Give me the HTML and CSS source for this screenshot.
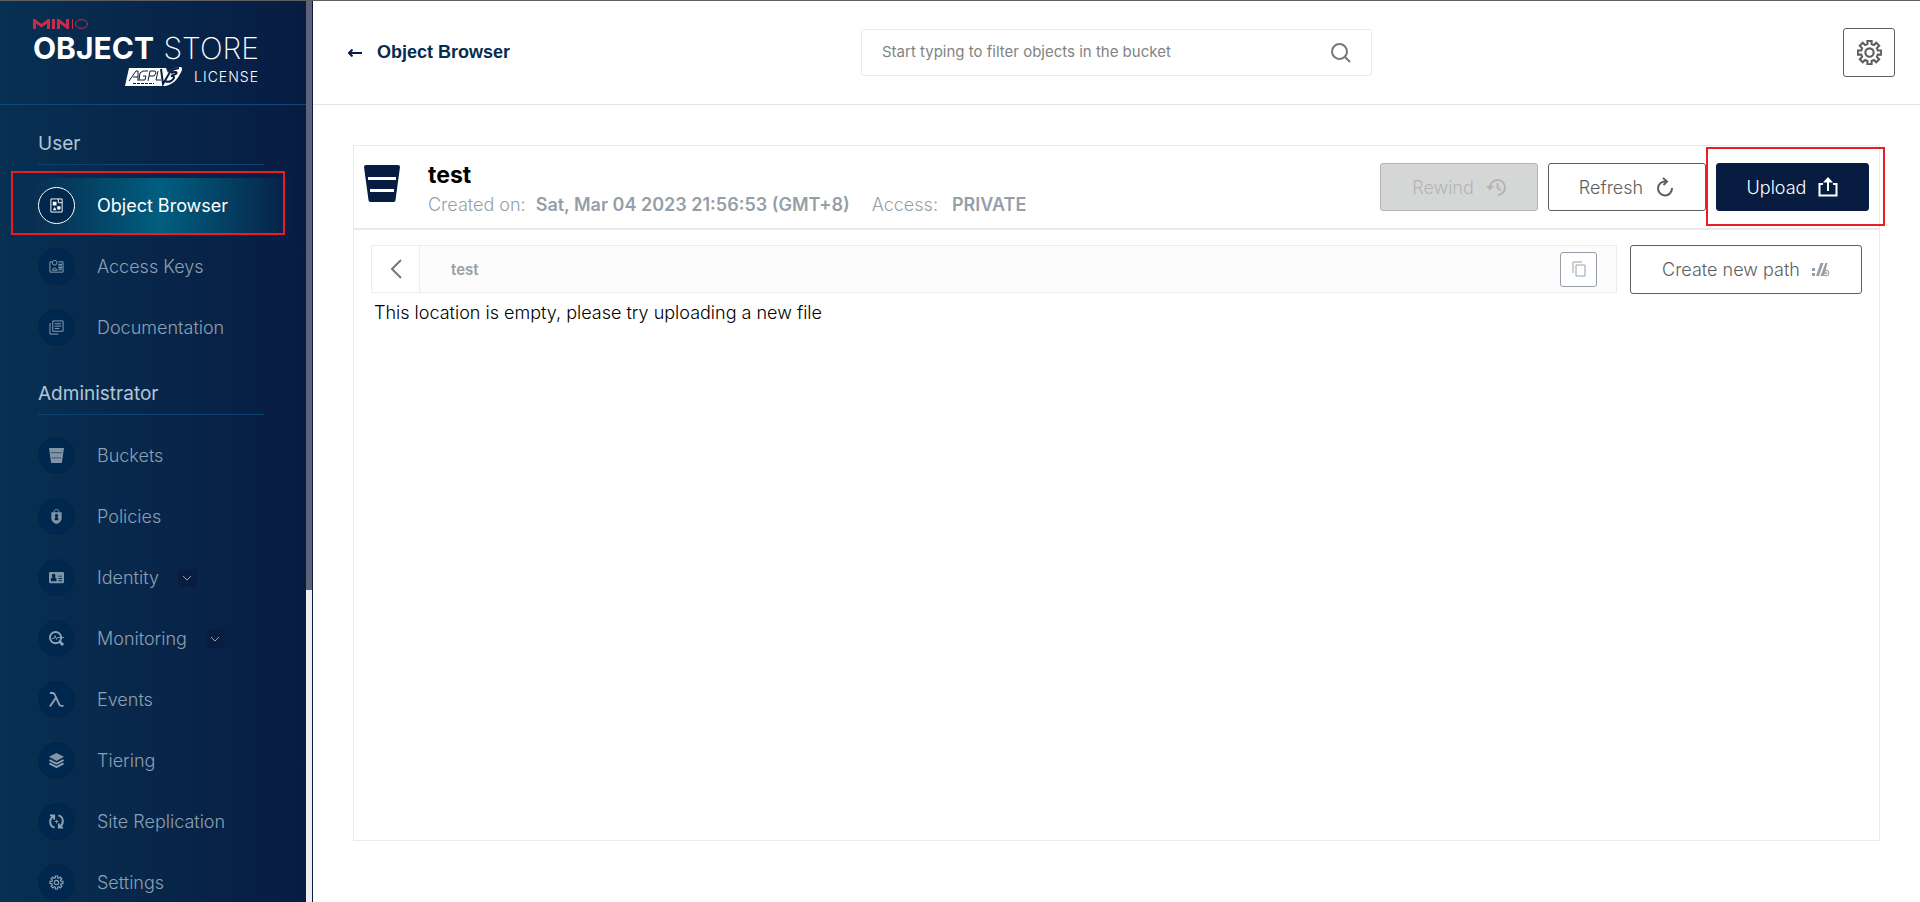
FILE: index.html
```html
<!DOCTYPE html>
<html lang="en">
<head>
<meta charset="utf-8">
<title>MinIO Console</title>
<link rel="stylesheet" href="styles.css">
</head>
<body>
<div class="app">
  <aside class="sidebar">
    <div class="menu">
      <div class="logo">
        <svg class="minio" viewBox="0 0 56 10" role="img" aria-label="MinIO">
          <path d="M0 10V0h2l6.500 5L15 0h2v10h-3V4.500L8.500 8.500 3 4.500V10zM19 0h3v10h-3zM24 10V0h2l7 5.500V0h3v10h-2l-7-5.500V10zM39 0h1v10h-1z"/>
          <ellipse cx="48.500" cy="5" rx="6" ry="4.400"/>
        </svg>
        <div class="product"><b>OBJECT</b><span>STORE</span></div>
        <div class="license">
          <svg class="agpl" viewBox="0 0 58 20" role="img" aria-label="AGPL v3">
            <path class="agpl-bg" d="M4 1h37l2 5C46 2 51 0 56 0c2 1 1 4-1 7-3 6-8 11-15 12H0z"/>
            <path class="agpl-ink" d="M4 14L11 4h2v10M8 10h5M23 4h-5l-3 2-1 7h6l1-4h-3M23 14l2-10h5l1 2-2 3h-5M33 4l-2 9h5"/>
            <path class="agpl-ink bold" d="M36 2l2 15L45 5c2-2 5-3.500 9-4"/>
            <path class="agpl-ink bold" d="M46 6c4-2 7-1 5 1l-5 2c5 0 3 3 0 5-2 1-4 1-6 0"/>
            <path class="agpl-ink" d="M8 16.500h21" stroke-dasharray="3 1"/>
          </svg>
          <span>LICENSE</span>
        </div>
      </div>
      <nav>
        <h2 class="group">User</h2>
        <a class="item active" href="#"><span class="dot"><svg viewBox="0 0 16 16"><path class="s" d="M2 1h12v14H2zM10 1v4h4"/><path d="M4 4h4v4H4zM4 13l2-3.500L8 13z"/><circle cx="10.500" cy="10.500" r="2"/></svg></span>Object Browser</a>
        <a class="item" href="#"><span class="dot"><svg viewBox="0 0 16 16"><path class="s" d="M3 3H1v11h14V3h-5M3.500 12c0-3 5-3 5 0z"/><circle class="s" cx="6" cy="4" r="2.500"/><path d="M10 5h4v2h-4zM10 8h4v2h-4zM10 11h4v1h-4z"/></svg></span>Access Keys</a>
        <a class="item" href="#"><span class="dot"><svg viewBox="0 0 16 16"><path class="s" d="M4 1h11v11H4zM1 4v11h9M1 4h1M6 4h7M6 6.500h7M6 9h5"/></svg></span>Documentation</a>
        <h2 class="group admin">Administrator</h2>
        <a class="item" href="#"><span class="dot"><svg viewBox="0 0 16 16"><path d="M0 0h16l-2.300 16H2.300z"/><path class="band" d="M2 5h12M3 10.500h10"/></svg></span>Buckets</a>
        <a class="item" href="#"><span class="dot"><svg viewBox="0 0 16 16"><path class="s" d="M5.500 4V2.500C5.500 0 10.500 0 10.500 2.500V4"/><path fill-rule="evenodd" d="M2.500 3.500h11V10c0 3-3 5-5.500 6-2.500-1-5.500-3-5.500-6zM8 5a2 2 0 0 0-1 3.600L6 10v2h4v-2L9 8.600A2 2 0 0 0 8 5z"/></svg></span>Policies</a>
        <a class="item" href="#"><span class="dot"><svg viewBox="0 0 16 16"><path fill-rule="evenodd" d="M1 2h14l1 1v10l-1 1H1l-1-1V3zM5 4a2 2 0 0 0-1 3.700L2 9v3h6V9L6 7.700A2 2 0 0 0 5 4zM10 6h4v1h-4zM10 8.500h4v1h-4zM10 11h4v1h-4z"/></svg></span>Identity<span class="caret"><svg viewBox="0 0 10 6"><path class="s" d="M1 1l4 4 4-4"/></svg></span></a>
        <a class="item" href="#"><span class="dot"><svg viewBox="0 0 16 16"><circle class="s mid" cx="7" cy="7" r="6"/><path class="s thick" d="M11 11l4 4"/><path class="s" d="M3 8h2l1.500-3L8 9l1-2h7"/></svg></span>Monitoring<span class="caret"><svg viewBox="0 0 10 6"><path class="s" d="M1 1l4 4 4-4"/></svg></span></a>
        <a class="item" href="#"><span class="dot"><svg viewBox="0 0 16 16"><path class="s mid" d="M1 1h3c1.500 0 2 1 2.500 2.500L11 13.500c.5 1.500 2 1.500 4.500 1M7.500 6L1 15.500"/></svg></span>Events</a>
        <a class="item" href="#"><span class="dot"><svg viewBox="0 0 16 16"><path d="M8 0l8 4-8 4.500L0 4z"/><path class="s mid" d="M.5 7.500L8 11.500l7.500-4M.5 11L8 15l7.500-4"/></svg></span>Tiering</a>
        <a class="item" href="#"><span class="dot"><svg viewBox="0 0 16 16"><path class="s mid" d="M6 14.500C0 13 0 5 4.500 2.500M1 1.500h4.500V6M10 1.500c6 1.500 6 9.500 1.500 12M15 14.500h-4.500V10"/><path d="M7.500 6h1v1.500H10v1H8.500V10h-1V8.500H6v-1h1.500z"/></svg></span>Site Replication</a>
        <a class="item" href="#"><span class="dot"><svg viewBox="-1 -1 26 26"><path class="s gear" d="M10 .8h4V4l2.200.9 2.300-2.200 2.800 2.800-2.200 2.300.9 2.200h3.200v4H20l-.9 2.200 2.200 2.300-2.800 2.800-2.300-2.200L14 20v3.200h-4V20l-2.200-.9-2.300 2.200-2.800-2.800 2.200-2.300L4 14H.8v-4H4l.9-2.200-2.200-2.300 2.800-2.800 2.300 2.200L10 4z"/><circle class="s gear" cx="12" cy="12" r="3.800"/></svg></span>Settings</a>
      </nav>
    </div>
    <div class="track"><div class="thumb"></div></div>
  </aside>

  <div class="page">
    <header class="topbar">
      <a class="back" href="#"><svg class="arrow" viewBox="0 0 14 8"><path d="M4.500 0.500L1 4l3.500 3.500M1 4h13"/></svg>Object Browser</a>
      <div class="search">
        <input type="text" aria-label="Filter objects" placeholder="Start typing to filter objects in the bucket">
        <svg viewBox="0 0 20 20"><circle cx="8.500" cy="8.500" r="7.500"/><path d="M13.500 13.500L19 19"/></svg>
      </div>
      <div class="tools">
        <button class="btn square" type="button" aria-label="Settings"><svg viewBox="0 0 24 24"><path d="M10 .8h4V4l2.200.9 2.300-2.200 2.800 2.800-2.200 2.300.9 2.200h3.200v4H20l-.9 2.200 2.200 2.300-2.800 2.800-2.300-2.200L14 20v3.200h-4V20l-2.200-.9-2.300 2.200-2.800-2.800 2.200-2.300L4 14H.8v-4H4l.9-2.200-2.200-2.300 2.800-2.800 2.300 2.200L10 4z"/><circle cx="12" cy="12" r="4"/></svg></button>
      </div>
    </header>

    <main class="card">
      <section class="bucket">
        <svg class="bucket-icon" viewBox="0 0 36 37"><path d="M2 0h32q2 0 2 2L31.500 35q0 2-2 2h-23q-2 0-2-2L0 2q0-2 2-2z"/><path class="gap" d="M4 13.500h28M6 25.500h24"/></svg>
        <div class="about">
          <h1>test</h1>
          <p><span>Created on:</span><b>Sat, Mar 04 2023 21:56:53 (GMT+8)</b><span class="access">Access:</span><b class="private">PRIVATE</b></p>
        </div>
        <div class="actions">
          <button class="btn" type="button" disabled>Rewind<svg viewBox="0 0 20 18"><path d="M4 9a7.500 7.500 0 1 1 7.500 8"/><path d="M11.500 5v4.500l3 3"/><path class="f" d="M0 8h8l-4 4.500z"/></svg></button>
          <button class="btn" type="button">Refresh<svg viewBox="0 0 20 20"><path class="w" d="M11 4.500A7 7 0 1 0 17 11"/><path class="w" d="M8 1l4 3.500L8.500 8"/></svg></button>
          <div class="marked"><button class="btn primary" type="button">Upload<svg viewBox="0 0 20 20"><path class="w" d="M5 7H1.500v11.500h17V7H15M10 14V2"/><path class="f" d="M10 0l5 5.500H5z"/></svg></button></div>
        </div>
      </section>
      <section class="browse">
        <div class="pathbar">
          <button class="up" type="button" aria-label="Back"><svg viewBox="0 0 12 20"><path d="M11 1L2 10l9 9"/></svg></button>
          <span class="crumb">test</span>
          <button class="copy" type="button" aria-label="Copy path"><svg viewBox="0 0 14 16"><path d="M1 12V1h9M4 4h9v11H4z"/></svg></button>
        </div>
        <button class="btn create" type="button">Create new path<svg viewBox="0 0 18 14"><path class="f" d="M0 5h3v3H0zM0 10h3v3H0zM8.500 0h3L7 13H4zM13.500 0h2L12 13H8.500z"/><circle cx="14" cy="10" r="3"/><path d="M12.500 10h3M14 8.500v3"/></svg></button>
      </section>
      <p class="empty">This location is empty, please try uploading a new file</p>
    </main>
  </div>
</div>
</body>
</html>
```
FILE: styles.css
```css
* { box-sizing: border-box; }
body {
  margin: 0;
  font-family: Inter, "Liberation Sans", sans-serif;
  font-size: 18px;
  font-weight: 300;
  color: #000;
  background: #fff;
}
h1, h2, p { margin: 0; }
a { color: inherit; text-decoration: none; }
button { font: inherit; cursor: pointer; }
svg { fill: none; flex: none; }

.app {
  display: flex;
  height: 100vh;
  overflow: hidden;
  border-top: 1px solid #5f5f62;
}

/* Sidebar */
.sidebar {
  flex: none;
  display: flex;
  width: 313px;
  border-right: 1px solid #081c42;
}
.menu {
  flex: 1;
  overflow: hidden;
  background: linear-gradient(90deg, #073052 0%, #081c42 100%);
}
.track { width: 6px; background: #eceef0; }
.thumb { height: 589px; background: #5e6379; }
.logo {
  display: flex;
  flex-direction: column;
  height: 104px;
  padding: 18px 47px 0 33px;
  border-bottom: 1px solid #0e4a75;
  color: #fff;
}
.minio { width: 56px; height: 10px; fill: #c72c48; stroke: #c72c48; stroke-width: 0; }
.minio ellipse { fill: none; stroke-width: 1; }
.product {
  display: flex;
  justify-content: space-between;
  font-size: 30px;
  line-height: 38px;
}
.product b { font-weight: 700; }
.product span { font-weight: 200; }
.license {
  display: flex;
  justify-content: flex-end;
  align-items: center;
  gap: 11px;
  font-size: 14px;
  line-height: 18px;
  letter-spacing: 1px;
}
.agpl { width: 58px; height: 20px; }
.agpl-bg { fill: #fff; }
.agpl-ink { stroke: #081c42; }
.agpl-ink.bold { stroke-width: 2; }

.group {
  margin: 27px 42px 0 38px;
  padding-bottom: 8px;
  border-bottom: 1px solid #0e4370;
  font-size: 19px;
  line-height: 24px;
  font-weight: 400;
  color: #b4c5d5;
}
.group + .item { margin-top: 13px; }
.item {
  display: flex;
  align-items: center;
  height: 55px;
  margin-bottom: 6px;
  padding-left: 38px;
  color: #8da0b2;
}
.dot {
  display: grid;
  place-items: center;
  width: 37px;
  height: 37px;
  margin-right: 22px;
  border: 1px solid #04254a;
  border-radius: 50%;
  background: #00274d;
}
.dot svg { width: 15px; height: 15px; fill: #8195a8; stroke: none; }
.dot .s, .caret .s { fill: none; stroke: #8fa3b6; stroke-width: 1; }
.dot .band { stroke: #33506d; stroke-width: 1; }
.dot .mid { stroke-width: 2; }
.dot .thick { stroke-width: 3; }
.dot .gear { stroke-width: 2; }
.active {
  position: relative;
  font-weight: 400;
  color: #fff;
  background: linear-gradient(90deg, rgba(0, 94, 128, 0) 10%, #005f80 52%, rgba(0, 94, 128, 0) 96%);
}
.active::after {
  content: "";
  position: absolute;
  inset: -7px 21px -2px 11px;
  border: 2px solid #ed1c24;
}
.active .dot { border-color: #fff; }
.active .dot svg { fill: #fff; }
.active .dot .s { stroke: #fff; }
.caret {
  display: grid;
  place-items: center;
  width: 19px;
  height: 18px;
  margin-left: 19px;
  border-radius: 2px;
  background: #0a1c40;
}
.caret svg { width: 10px; height: 6px; }

/* Main area */
.page { flex: 1; min-width: 0; }
.topbar {
  display: grid;
  grid-template-columns: 1fr 511px 1fr;
  align-items: center;
  height: 104px;
  padding: 0 25px;
  border-bottom: 1px solid #e5e5e5;
}
.back {
  display: flex;
  align-items: center;
  gap: 15px;
  padding-left: 10px;
  font-family: "Liberation Sans", Arial, sans-serif;
  font-weight: 700;
  color: #072c4f;
}
.arrow { width: 14px; height: 8px; stroke: #081c42; stroke-width: 2; }
.search {
  display: flex;
  align-items: center;
  height: 47px;
  padding: 0 20px;
  border: 1px solid #eaeaea;
  border-radius: 3px;
}
.search input {
  flex: 1;
  padding: 0 0 3px;
  border: 0;
  outline: 0;
  font: 15px Inter, sans-serif;
}
.search input::placeholder { color: #838383; opacity: 1; }
.search svg { width: 20px; height: 20px; stroke: #767676; stroke-width: 2; }
.tools { display: flex; justify-content: flex-end; }

.btn {
  display: flex;
  align-items: center;
  justify-content: center;
  gap: 12px;
  height: 49px;
  padding: 0;
  border: 1px solid #5e5e5e;
  border-radius: 3px;
  background: #fff;
  color: #5e5e5e;
}
.btn svg { width: 20px; height: 20px; stroke: currentColor; stroke-width: 1; }
.btn svg .w { stroke-width: 2; }
.btn svg .f { fill: currentColor; stroke: none; }
.btn:disabled { border-color: #b4b4b4; background: #d5d7d7; color: #b4b4b4; }
.btn:disabled svg { stroke-width: 2; }
.square { width: 52px; }
.square svg { width: 25px; height: 25px; stroke-width: 2; }
.primary { border-color: #081c42; background: #081c42; color: #fff; }

.card {
  height: 696px;
  margin: 40px 40px 0;
  border: 1px solid #eaeaea;
}
.bucket {
  display: flex;
  align-items: center;
  height: 84px;
  padding: 0 10px;
  border-bottom: 2px solid #eaeaea;
}
.bucket-icon { width: 36px; height: 37px; margin-bottom: 8px; fill: #081c42; }
.bucket-icon .gap { stroke: #fff; stroke-width: 3; }
.about { flex: 1; margin-left: 28px; padding-top: 5px; }
.about h1 { font-size: 23px; line-height: 30px; font-weight: 700; }
.about p { display: flex; gap: 10px; line-height: 30px; color: #969fa8; }
.about b { font-weight: 600; }
.access { margin-left: 12px; }
.private { margin-left: 4px; }
.actions { display: flex; gap: 10px; }
.actions .btn { width: 158px; height: 48px; }
.marked { position: relative; }
.marked .btn { width: 153px; }
.marked::after {
  content: "";
  position: absolute;
  inset: -16px -16px -15px -10px;
  border: 2px solid #ed1c24;
  pointer-events: none;
}

.browse { display: flex; align-items: flex-start; gap: 13px; padding: 15px 17px 0; }
.pathbar {
  flex: 1;
  display: flex;
  align-items: center;
  height: 48px;
  padding-right: 19px;
  border: 1px solid #eaedee;
  background: #fcfcfc;
}
.up {
  display: grid;
  place-items: center;
  width: 48px;
  height: 46px;
  padding: 0;
  border: 0;
  border-right: 1px solid #eaedee;
  background: #fff;
}
.up svg { width: 12px; height: 20px; stroke: #767676; stroke-width: 2; }
.crumb { flex: 1; margin-left: 31px; font-size: 15px; font-weight: 600; color: #969fa8; }
.copy {
  display: grid;
  place-items: center;
  width: 37px;
  height: 35px;
  padding: 0;
  border: 1px solid #969fa8;
  border-radius: 3px;
  background: #fff;
}
.copy svg { width: 14px; height: 16px; stroke: #969fa8; stroke-width: 1; }
.create { width: 232px; }
.create svg { width: 18px; height: 14px; color: #969fa8; }
.empty { padding: 7px 20px; line-height: 24px; color: #000; }
```
